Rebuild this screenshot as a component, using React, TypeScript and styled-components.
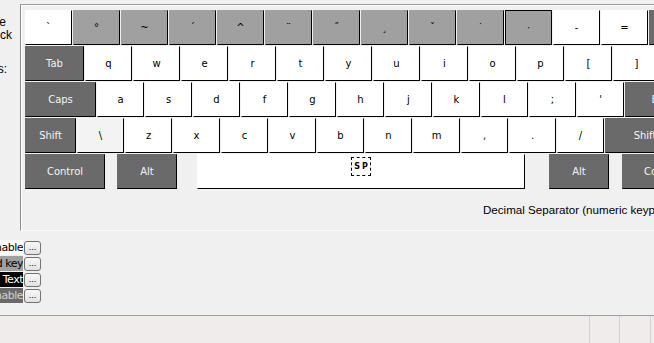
import React from "react";
import styled, { createGlobalStyle } from "styled-components";

type Tone = "white" | "mid" | "dark" | "light";

const GlobalStyle = createGlobalStyle`
  html, body {
    margin: 0;
    padding: 0;
    background: #f0f0f0;
  }
  body {
    width: 654px;
    height: 343px;
    overflow: hidden;
    font-family: "Liberation Sans", Arial, sans-serif;
  }
`;

const Page = styled.div`
  width: 654px;
  height: 343px;
  display: flex;
  flex-direction: column;
  overflow: hidden;
  background: #f0f0f0;
`;

const TopArea = styled.div`
  display: flex;
  height: 231px;
  flex-shrink: 0;
`;

const SideLabels = styled.div`
  width: 20px;
  flex-shrink: 0;
  display: flex;
  flex-direction: column;
  padding-top: 16px;
  font-size: 12px;
  line-height: 12px;
  color: #000;
`;

const SideLine = styled.div<{ $inset: number; $top?: number }>`
  display: flex;
  justify-content: flex-end;
  overflow: hidden;
  white-space: nowrap;
  height: 13px;
  padding-right: ${(p) => p.$inset}px;
  margin-top: ${(p) => p.$top ?? 0}px;
  span {
    flex-shrink: 0;
  }
`;

const GroupBox = styled.div`
  flex: 1;
  min-width: 0;
  margin-top: 4px;
  border-top: 1px solid #a0a0a0;
  border-left: 1px solid #8c8c8c;
  border-bottom: 1px solid #fbfbfb;
  box-shadow: inset 1px 1px 0 #fff;
  overflow: hidden;
  padding: 5px 0 0 4px;
`;

const Keyboard = styled.div`
  display: flex;
  flex-direction: column;
  gap: 1px;
`;

const KeyRow = styled.div`
  display: flex;
`;

const toneBg: Record<Tone, string> = {
  white: "#ffffff",
  mid: "#a0a0a0",
  dark: "#6a6a6a",
  light: "#f3f3f3",
};

const Key = styled.div<{ $w?: number; $tone?: Tone; $gap?: number; $active?: boolean }>`
  box-sizing: border-box;
  flex: 0 0 ${(p) => p.$w ?? 47}px;
  height: 35px;
  margin-left: ${(p) => p.$gap ?? 0}px;
  margin-right: 1px;
  display: flex;
  align-items: center;
  justify-content: center;
  border-right: 1px solid #000;
  border-bottom: 1px solid #000;
  border-top: 1px solid ${(p) => (p.$active ? "#000" : "transparent")};
  border-left: 1px solid ${(p) => (p.$active ? "#000" : "transparent")};
  background: ${(p) => toneBg[p.$tone ?? "white"]};
  color: ${(p) => (p.$tone === "dark" ? "#f4f4f4" : "#000")};
  font-family: "DejaVu Sans", Verdana, sans-serif;
  font-size: 10px;
  white-space: nowrap;
`;

const SpaceKey = styled(Key)`
  align-items: flex-start;
  padding-top: 2px;
`;

const FocusBox = styled.span`
  box-sizing: border-box;
  width: 20px;
  height: 19px;
  border: 1px dashed #000;
  display: flex;
  align-items: center;
  justify-content: center;
  font-size: 8px;
  font-weight: bold;
  letter-spacing: 2px;
  padding-left: 2px;
`;

const Note = styled.div`
  padding-left: 458px;
  margin-top: 14px;
  font-size: 11.6px;
  line-height: 14px;
  color: #000;
  white-space: nowrap;
`;

const Legend = styled.div`
  flex: 1;
  display: flex;
  flex-direction: column;
  padding-top: 9px;
  gap: 1px;
`;

const LegendRow = styled.div`
  display: flex;
  align-items: center;
  height: 15px;
  gap: 1px;
`;

const Swatch = styled.div<{ $bg: string; $fg: string }>`
  width: 23px;
  height: 15px;
  display: flex;
  align-items: center;
  justify-content: flex-end;
  overflow: hidden;
  white-space: nowrap;
  background: ${(p) => p.$bg};
  color: ${(p) => p.$fg};
  font-family: "DejaVu Sans", Verdana, sans-serif;
  font-size: 11px;
  letter-spacing: -0.5px;
  span {
    flex-shrink: 0;
  }
`;

const DotsButton = styled.div`
  box-sizing: border-box;
  width: 17px;
  height: 14px;
  border: 1px solid #707070;
  border-radius: 3px;
  background: linear-gradient(#f8f8f8, #e2e2e2);
  display: flex;
  align-items: flex-end;
  justify-content: center;
  font-size: 9px;
  line-height: 9px;
  padding-bottom: 2px;
  color: #000;
`;

const StatusBar = styled.div`
  height: 27px;
  flex-shrink: 0;
  border-top: 1px solid #a0a0a0;
  background: #f0ecec;
  display: flex;
`;

const StatusPane = styled.div<{ $w?: number }>`
  flex: ${(p) => (p.$w ? `0 0 ${p.$w}px` : "1")};
  border-left: 1px solid ${(p) => (p.$w ? "#d2d2d2" : "transparent")};
  box-sizing: border-box;
`;

type KeyDef = { label: string; w?: number; tone?: Tone; gap?: number; active?: boolean };

const row1: KeyDef[] = [
  { label: "`" },
  { label: "°", tone: "mid" },
  { label: "~", tone: "mid" },
  { label: "´", tone: "mid" },
  { label: "^", tone: "mid" },
  { label: "¨", tone: "mid" },
  { label: "˝", tone: "mid" },
  { label: "¸", tone: "mid" },
  { label: "ˇ", tone: "mid" },
  { label: "˙", tone: "mid" },
  { label: "·", tone: "mid", active: true },
  { label: "-" },
  { label: "=" },
  { label: "Back", w: 80, tone: "dark" },
];

const row2: KeyDef[] = [
  { label: "Tab", w: 59, tone: "dark" },
  ..."qwertyuiop[]".split("").map((c) => ({ label: c })),
];

const row3: KeyDef[] = [
  { label: "Caps", w: 71, tone: "dark" },
  ..."asdfghjkl;'".split("").map((c) => ({ label: c })),
  { label: "Enter", w: 80, tone: "dark" },
];

const row4: KeyDef[] = [
  { label: "Shift", w: 51, tone: "dark" },
  { label: "\\", tone: "light" },
  ..."zxcvbnm,./".split("").map((c) => ({ label: c })),
  { label: "Shift", w: 80, tone: "dark" },
];

const legend = [
  { text: "Enable", bg: "#ffffff", fg: "#000" },
  { text: "Dead key", bg: "#a0a0a0", fg: "#000" },
  { text: "Selected Text", bg: "#000000", fg: "#fff" },
  { text: "Unenable", bg: "#6a6a6a", fg: "#d0d0d0" },
];

const renderRow = (keys: KeyDef[]) => (
  <KeyRow>
    {keys.map((k, i) => (
      <Key key={i} $w={k.w} $tone={k.tone} $gap={k.gap} $active={k.active}>
        {k.label}
      </Key>
    ))}
  </KeyRow>
);

const App = () => {
  return (
    <Page>
      <GlobalStyle />
      <TopArea>
        <SideLabels>
          <SideLine $inset={14}>
            <span>Toggle</span>
          </SideLine>
          <SideLine $inset={8}>
            <span>Caps Lock</span>
          </SideLine>
          <SideLine $inset={13} $top={21}>
            <span>Keys:</span>
          </SideLine>
        </SideLabels>
        <GroupBox>
          <Keyboard>
            {renderRow(row1)}
            {renderRow(row2)}
            {renderRow(row3)}
            {renderRow(row4)}
            <KeyRow>
              <Key $w={80} $tone="dark">Control</Key>
              <Key $w={60} $tone="dark" $gap={11}>Alt</Key>
              <SpaceKey $w={328} $gap={19}>
                <FocusBox>SP</FocusBox>
              </SpaceKey>
              <Key $w={60} $tone="dark" $gap={23}>Alt</Key>
              <Key $w={80} $tone="dark" $gap={12}>Control</Key>
            </KeyRow>
          </Keyboard>
          <Note>Decimal Separator (numeric keypad)</Note>
        </GroupBox>
      </TopArea>
      <Legend>
        {legend.map((l) => (
          <LegendRow key={l.text}>
            <Swatch $bg={l.bg} $fg={l.fg}>
              <span>{l.text}</span>
            </Swatch>
            <DotsButton>...</DotsButton>
          </LegendRow>
        ))}
      </Legend>
      <StatusBar>
        <StatusPane />
        <StatusPane $w={30} />
        <StatusPane $w={31} />
        <StatusPane $w={4} />
      </StatusBar>
    </Page>
  );
};

export default App;
